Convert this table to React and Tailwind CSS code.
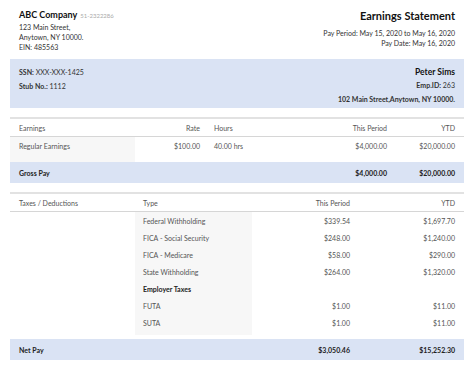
import React from 'react'

const taxes = [
  { type: 'Federal Withholding', period: '$339.54', ytd: '$1,697.70' },
  { type: 'FICA - Social Security', period: '$248.00', ytd: '$1,240.00' },
  { type: 'FICA - Medicare', period: '$58.00', ytd: '$290.00' },
  { type: 'State Withholding', period: '$264.00', ytd: '$1,320.00' },
  { type: 'Employer Taxes', bold: true },
  { type: 'FUTA', period: '$1.00', ytd: '$11.00' },
  { type: 'SUTA', period: '$1.00', ytd: '$11.00' },
]

export default function App() {
  return (
    <div className="w-[474px] h-[373px] bg-white px-[10px] text-[7px] leading-[10px] text-[#333]" style={{ fontFamily: 'Lato, "Open Sans", sans-serif' }}>
      {/* cabecera */}
      <div className="flex justify-between pt-[8px] px-[9px]">
        <div>
          <div className="h-[14px] leading-[14px]">
            <span className="text-[9px] font-bold text-[#111]">ABC Company</span>
            <span className="text-[6px] text-[#aaa] ml-[3px]">51-2322286</span>
          </div>
          <div>123 Main Street,</div>
          <div>Anytown, NY 10000.</div>
          <div>EIN: 485563</div>
        </div>
        <div className="text-right pt-[1px]">
          <div className="text-[11px] leading-[14px] font-bold text-[#111]">Earnings Statement</div>
          <div className="mt-[5px]">Pay Period: May 15, 2020 to May 16, 2020</div>
          <div>Pay Date: May 16, 2020</div>
        </div>
      </div>

      {/* empleado */}
      <div className="mt-[7px] h-[49px] bg-[#dae3f4] flex justify-between px-[9px] pt-[7px]">
        <div className="pt-[1px]">
          <div><span className="font-bold">SSN:</span> XXX-XXX-1425</div>
          <div className="mt-[4px]"><span className="font-bold">Stub No.:</span> 1112</div>
        </div>
        <div className="text-right">
          <div className="text-[8.5px] leading-[12px] font-bold text-[#111]">Peter Sims</div>
          <div className="mt-[2px]"><span className="font-bold">Emp.ID:</span> 263</div>
          <div className="mt-[4px] font-bold">102 Main Street,Anytown, NY 10000.</div>
        </div>
      </div>

      {/* ingresos */}
      <div className="mt-[9px] border-t-2 border-[#e2e2e2]">
        <div className="grid grid-cols-[125px_70px_95px_96px_68px] h-[18px] items-center text-[#555] border-b border-[#d6d6d6]">
          <div className="pl-[9px]">Earnings</div>
          <div className="text-right pr-[5px]">Rate</div>
          <div className="pl-[9px]">Hours</div>
          <div className="text-right pr-[9px]">This Period</div>
          <div className="text-right pr-[9px]">YTD</div>
        </div>
        <div className="grid grid-cols-[125px_70px_95px_96px_68px] h-[25px] text-[#555]">
          <div className="pl-[9px] pt-[4px] bg-[#f7f7f7]">Regular Earnings</div>
          <div className="text-right pr-[5px] pt-[4px]">$100.00</div>
          <div className="pl-[9px] pt-[4px]">40.00 hrs</div>
          <div className="text-right pr-[9px] pt-[4px]">$4,000.00</div>
          <div className="text-right pr-[9px] pt-[4px]">$20,000.00</div>
        </div>
        <div className="grid grid-cols-[125px_70px_95px_96px_68px] h-[21px] items-center bg-[#dae3f4] font-bold text-[#222]">
          <div className="pl-[9px]">Gross Pay</div>
          <div></div>
          <div></div>
          <div className="text-right pr-[9px]">$4,000.00</div>
          <div className="text-right pr-[9px]">$20,000.00</div>
        </div>
      </div>

      {/* impuestos */}
      <div className="mt-[9px] border-t-2 border-[#e2e2e2]">
        <div className="grid grid-cols-[125px_117px_107px_105px] h-[18px] items-center text-[#555] border-b border-[#d6d6d6]">
          <div className="pl-[9px]">Taxes / Deductions</div>
          <div className="pl-[8px]">Type</div>
          <div className="text-right pr-[9px]">This Period</div>
          <div className="text-right pr-[9px]">YTD</div>
        </div>
        <div className="grid grid-cols-[125px_117px_107px_105px] text-[#555]">
          <div></div>
          <div className="bg-[#f7f7f7] pl-[8px] pb-[4px]">
            {taxes.map((t) => (
              <div key={t.type} className={'h-[17px] flex items-center ' + (t.bold ? 'font-bold text-[#222]' : '')}>{t.type}</div>
            ))}
          </div>
          <div className="pr-[9px]">
            {taxes.map((t) => (
              <div key={t.type} className="h-[17px] flex items-center justify-end">{t.period}</div>
            ))}
          </div>
          <div className="pr-[9px]">
            {taxes.map((t) => (
              <div key={t.type} className="h-[17px] flex items-center justify-end">{t.ytd}</div>
            ))}
          </div>
        </div>
        <div className="mt-[4px] grid grid-cols-[125px_117px_107px_105px] h-[21px] items-center bg-[#dae3f4] font-bold text-[#222]">
          <div className="pl-[9px]">Net Pay</div>
          <div></div>
          <div className="text-right pr-[9px]">$3,050.46</div>
          <div className="text-right pr-[9px]">$15,252.30</div>
        </div>
      </div>
    </div>
  )
}
